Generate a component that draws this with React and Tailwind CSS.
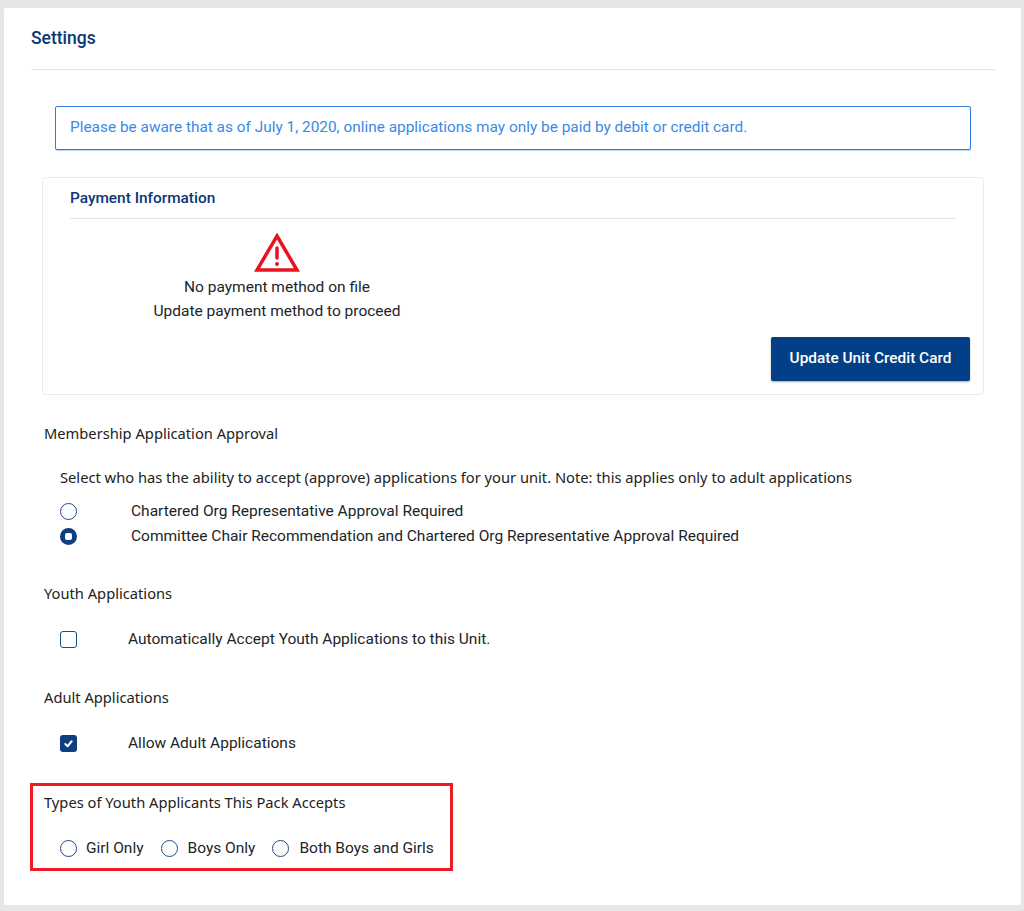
import React from 'react'

const ROBOTO = "font-['Roboto','Liberation_Sans',sans-serif]"
const SEGOE = "font-['Noto_Sans','Open_Sans',sans-serif]"

function Radio({ checked }) {
    if (checked) {
        return (
            <span className="w-[17px] h-[17px] rounded-full bg-[#0b3f7f] flex items-center justify-center shrink-0">
                <span className="block w-[7px] h-[7px] rounded-[2px] bg-white" />
            </span>
        )
    }
    return <span className="block w-[17px] h-[17px] rounded-full border-[1.5px] border-[#1f4a85] bg-white shrink-0" />
}

function Checkbox({ checked }) {
    if (checked) {
        return (
            <span className="w-[17px] h-[17px] rounded-[3px] bg-[#0b3f7f] flex items-center justify-center shrink-0">
                <svg width="11" height="11" viewBox="0 0 12 12" fill="none" stroke="white" strokeWidth="2.2" strokeLinecap="round" strokeLinejoin="round">
                    <polyline points="2.5 6.5 5 9 9.5 3.5" />
                </svg>
            </span>
        )
    }
    return <span className="block w-[17px] h-[17px] rounded-[3px] border-[1.5px] border-[#1f4a85] bg-white shrink-0" />
}

function WarningIcon() {
    return (
        <svg width="46" height="40" viewBox="0 0 46 40" fill="none">
            <path d="M23 3 L43 37 L3 37 Z" stroke="#e8131f" strokeWidth="3.5" strokeLinejoin="miter" />
            <line x1="23" y1="15" x2="23" y2="25" stroke="#e8131f" strokeWidth="3.5" strokeLinecap="round" />
            <circle cx="23" cy="31" r="2" fill="#e8131f" />
        </svg>
    )
}

function Heading({ children, className = '' }) {
    return <h3 className={`text-[14.7px] leading-[20px] text-[#222] ${SEGOE} ${className}`}>{children}</h3>
}

export default function App() {
    return (
        <div className={`min-h-screen bg-[#e6e6e6] pt-2 pl-1 pr-[3px] ${ROBOTO}`}>
            <div className="bg-white h-[897px] rounded-[2px]">

                {/* header */}
                <div className="ml-[27px] mr-[26px] pt-[20px] pb-[21px] border-b border-[#e3e3e3]">
                    <h1 className="text-[17.5px] leading-[20px] font-medium text-[#0a3678]">Settings</h1>
                </div>

                {/* notice */}
                <div className="mt-[36px] ml-[51px] mr-[50px] h-[44px] border border-[#2f7de1] rounded-[2px] flex items-center pl-[14px] shadow-[0_1px_1px_rgba(47,125,225,0.35)]">
                    <p className="text-[15.4px] text-[#3a8ae4]">Please be aware that as of July 1, 2020, online applications may only be paid by debit or credit card.</p>
                </div>

                {/* payment card */}
                <div className="mt-[27px] ml-[38px] mr-[37px] h-[218px] border border-[#ebebeb] rounded-[4px]">
                    <div className="mx-[27px] pt-[10px] pb-[10px] border-b border-[#e3e3e3]">
                        <h2 className="text-[15.4px] leading-[20px] font-medium text-[#0a3678]">Payment Information</h2>
                    </div>
                    <div className="pl-[27px] pr-[13px]">
                        <div className="w-[414px] flex flex-col items-center pt-[14px] text-[15.5px] text-[#212529]">
                            <WarningIcon />
                            <p className="leading-[24px] mt-[2px]">No payment method on file</p>
                            <p className="leading-[24px]">Update payment method to proceed</p>
                        </div>
                        <div className="flex justify-end mt-[14px]">
                            <button className="h-[44px] w-[199px] bg-[#023f87] text-white text-[15.4px] font-medium rounded-[2px] shadow-[0_1px_2px_rgba(0,0,0,0.35)]">
                                Update Unit Credit Card
                            </button>
                        </div>
                    </div>
                </div>

                {/* settings sections */}
                <div className="pl-[40px] text-[15.5px] text-[#212529]">
                    <Heading className="mt-[28px]">Membership Application Approval</Heading>
                    <p className={`mt-[24px] ml-[16px] text-[14.7px] leading-[20px] text-[#222] ${SEGOE}`}>
                        Select who has the ability to accept (approve) applications for your unit. Note: this applies only to adult applications
                    </p>
                    <div className="mt-[12px] ml-[16px]">
                        <div className="flex items-center h-[25px]">
                            <Radio />
                            <span className="ml-[54px]">Chartered Org Representative Approval Required</span>
                        </div>
                        <div className="flex items-center h-[25px]">
                            <Radio checked />
                            <span className="ml-[54px]">Committee Chair Recommendation and Chartered Org Representative Approval Required</span>
                        </div>
                    </div>

                    <Heading className="mt-[34px]">Youth Applications</Heading>
                    <div className="mt-[24px] ml-[16px] flex items-center h-[25px]">
                        <Checkbox />
                        <span className="ml-[51px]">Automatically Accept Youth Applications to this Unit.</span>
                    </div>

                    <Heading className="mt-[35px]">Adult Applications</Heading>
                    <div className="mt-[24px] ml-[16px] flex items-center h-[25px]">
                        <Checkbox checked />
                        <span className="ml-[51px]">Allow Adult Applications</span>
                    </div>

                    <div className="mt-[27px] -ml-[14px] w-[423px] border-[3px] border-[#ec1c24] pl-[11px] pt-[6px] pb-[7px]">
                        <Heading>Types of Youth Applicants This Pack Accepts</Heading>
                        <div className="mt-[24px] ml-[16px] flex items-center h-[25px]">
                            <Radio />
                            <span className="ml-[9px]">Girl Only</span>
                            <span className="ml-[17px]"><Radio /></span>
                            <span className="ml-[10px]">Boys Only</span>
                            <span className="ml-[17px]"><Radio /></span>
                            <span className="ml-[10px]">Both Boys and Girls</span>
                        </div>
                    </div>
                </div>
            </div>
        </div>
    )
}
